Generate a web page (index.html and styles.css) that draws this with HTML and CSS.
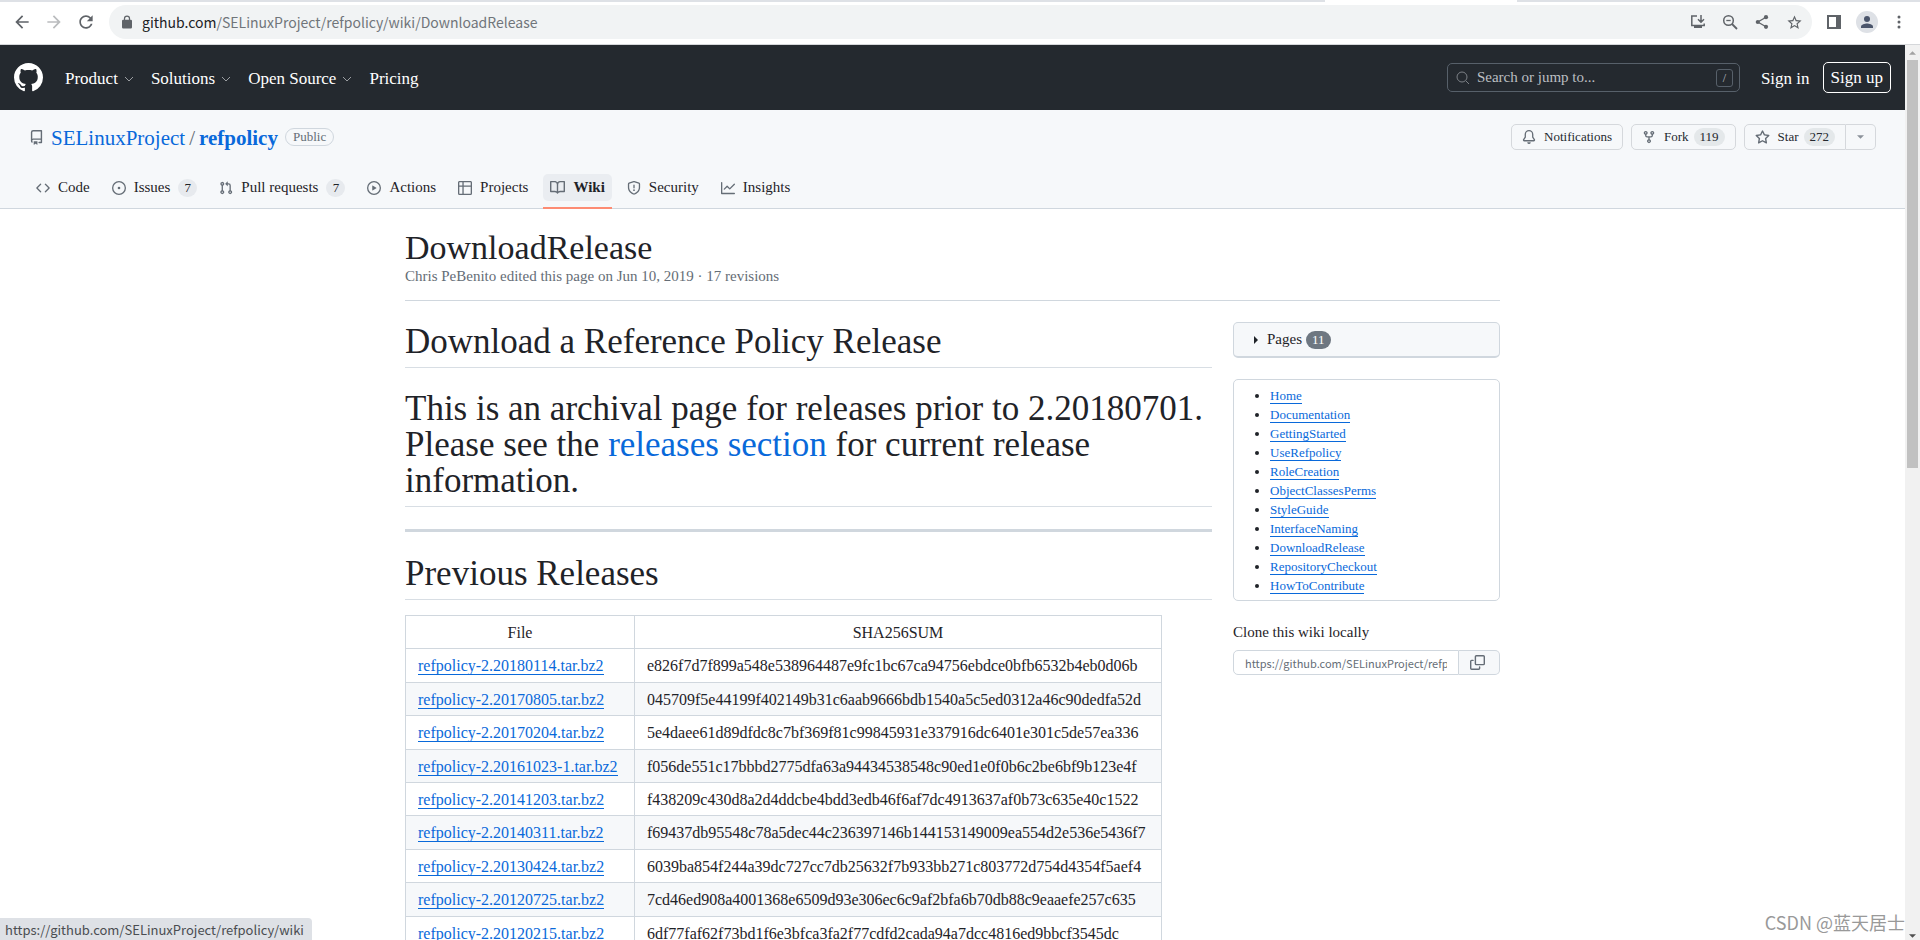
FILE: index.html
```html
<!DOCTYPE html>
<html lang="en">
<head>
    <meta charset="UTF-8">
    <meta name="viewport" content="width=device-width, initial-scale=1.0">
    <title>DownloadRelease · SELinuxProject/refpolicy Wiki</title>
    <link rel="stylesheet" href="styles.css">
</head>
<body>

    <!-- Browser toolbar -->
    <div class="tabstrip">
        <span class="tabs-left"></span>
        <span class="tabs-right"></span>
    </div>
    <div class="toolbar">
        <button class="tool" aria-label="Back"><svg viewBox="0 0 24 24" width="20" height="20"><path d="M20 11H7.83l5.59-5.59L12 4l-8 8 8 8 1.41-1.41L7.83 13H20v-2z"/></svg></button>
        <button class="tool disabled" aria-label="Forward"><svg viewBox="0 0 24 24" width="20" height="20"><path d="M12 4l-1.41 1.41L16.17 11H4v2h12.17l-5.58 5.59L12 20l8-8z"/></svg></button>
        <button class="tool" aria-label="Reload"><svg viewBox="0 0 24 24" width="20" height="20"><path d="M17.65 6.35C16.2 4.9 14.21 4 12 4c-4.42 0-7.99 3.58-7.99 8s3.57 8 7.99 8c3.73 0 6.84-2.55 7.73-6h-2.08c-.82 2.33-3.04 4-5.65 4-3.31 0-6-2.69-6-6s2.69-6 6-6c1.66 0 3.14.69 4.22 1.78L13 11h7V4l-2.35 2.35z"/></svg></button>
        <div class="omnibox">
            <svg class="lock" viewBox="0 0 16 21" width="10" height="14"><path d="M14 7h-1V5A5 5 0 0 0 3 5v2H2a2 2 0 0 0-2 2v10a2 2 0 0 0 2 2h12a2 2 0 0 0 2-2V9a2 2 0 0 0-2-2zM5 5a3 3 0 0 1 6 0v2H5z"/></svg>
            <div class="url"><span>github.com</span>/SELinuxProject/refpolicy/wiki/DownloadRelease</div>
            <button class="tool" aria-label="Install"><svg viewBox="0 0 16 16" width="16" height="16"><path fill="none" stroke="currentColor" stroke-width="1.5" d="M7 2H1.800v9.500h12.400V9.500M11 1v7M8 5.200l3 3 3-3"/><path d="M4 11.500h8V14H4z"/></svg></button>
            <button class="tool" aria-label="Zoom"><svg viewBox="0 0 16 16" width="16" height="16" class="line"><circle cx="6.500" cy="6.500" r="4.800" stroke-width="1.500"/><path stroke-width="1.800" d="M10 10l5 5"/><path stroke-width="1.300" d="M4.300 6.500h4.400"/></svg></button>
            <button class="tool" aria-label="Share"><svg viewBox="0 0 16 16" width="16" height="16"><circle cx="3.800" cy="8" r="2.100"/><circle cx="12" cy="3.200" r="2.100"/><circle cx="12" cy="12.800" r="2.100"/><path fill="none" stroke="currentColor" stroke-width="1.300" d="M12 3.200L3.800 8l8.200 4.800"/></svg></button>
            <button class="tool" aria-label="Bookmark"><svg viewBox="0 0 24 24" width="17" height="17"><path d="M22 9.240l-7.190-.62L12 2 9.190 8.630 2 9.240l5.460 4.730L5.820 21 12 17.270 18.180 21l-1.630-7.030L22 9.240zM12 15.400l-3.760 2.270 1-4.280-3.320-2.880 4.380-.38L12 6.100l1.710 4.040 4.380.38-3.320 2.880 1 4.280L12 15.400z"/></svg></button>
        </div>
        <button class="tool" aria-label="Side panel"><svg viewBox="0 0 14 14" width="14" height="14"><path fill-rule="evenodd" d="M0 0h14v14H0zM2 2v10h7V2z"/></svg></button>
        <button class="tool avatar" aria-label="Profile"><svg viewBox="0 0 14 14" width="14" height="14"><circle cx="7" cy="4" r="3"/><path d="M1 13v-1.500c0-2 4-3 6-3s6 1 6 3V13z"/></svg></button>
        <button class="tool" aria-label="Menu"><svg viewBox="0 0 4 14" width="4" height="14"><circle cx="2" cy="2" r="1.500"/><circle cx="2" cy="7" r="1.500"/><circle cx="2" cy="12" r="1.500"/></svg></button>
    </div>

    <div class="viewport">
        <div class="page">

            <header class="site-header">
                <a href="#" class="logo" aria-label="GitHub"><svg viewBox="0 0 16 16" width="29" height="29"><path d="M8 0c4.420 0 8 3.580 8 8a8.013 8.013 0 0 1-5.450 7.590c-.4.080-.55-.17-.55-.38 0-.27.010-1.130.010-2.200 0-.75-.25-1.230-.54-1.480 1.780-.2 3.650-.88 3.650-3.950 0-.88-.31-1.590-.82-2.150.080-.2.360-1.020-.080-2.120 0 0-.67-.22-2.200.82-.64-.18-1.320-.27-2-.27-.68 0-1.360.090-2 .27-1.530-1.030-2.200-.82-2.200-.82-.44 1.100-.16 1.920-.080 2.120-.51.560-.82 1.280-.82 2.150 0 3.060 1.860 3.750 3.640 3.950-.23.200-.44.550-.51 1.070-.46.210-1.610.550-2.330-.66-.15-.24-.6-.83-1.230-.82-.67.010-.27.380.010.530.340.190.730.900.820 1.130.160.450.680 1.310 2.690.940 0 .67.010 1.300.010 1.490 0 .21-.15.450-.55.380A7.995 7.995 0 0 1 0 8c0-4.420 3.580-8 8-8Z"/></svg></a>
                <nav class="site-nav">
                    <button>Product <svg viewBox="0 0 10 6" width="10" height="6"><path d="M1 1l4 4 4-4"/></svg></button>
                    <button>Solutions <svg viewBox="0 0 10 6" width="10" height="6"><path d="M1 1l4 4 4-4"/></svg></button>
                    <button>Open Source <svg viewBox="0 0 10 6" width="10" height="6"><path d="M1 1l4 4 4-4"/></svg></button>
                    <a href="#">Pricing</a>
                </nav>
                <div class="search">
                    <svg viewBox="0 0 14 14" width="14" height="14"><circle cx="6" cy="6" r="5"/><path d="M10 10l3 3"/></svg>
                    <input type="text" placeholder="Search or jump to..." aria-label="Search or jump to">
                    <kbd>/</kbd>
                </div>
                <a href="#" class="sign-in">Sign in</a>
                <a href="#" class="sign-up">Sign up</a>
            </header>

            <div class="repo-header">
                <div class="repo-top">
                    <svg class="octicon" viewBox="0 0 16 16" width="15" height="15"><path d="M2 2.500A2.500 2.500 0 0 1 4.500 0h8.750a.75.750 0 0 1 .75.750v12.500a.75.750 0 0 1-.75.750h-2.500a.75.750 0 0 1 0-1.500h1.750v-2h-8a1 1 0 0 0-.714 1.700.75.750 0 1 1-1.072 1.050A2.495 2.495 0 0 1 2 11.500Zm10.500-1h-8a1 1 0 0 0-1 1v6.708A2.486 2.486 0 0 1 4.500 9h8ZM5 12.250a.25.250 0 0 1 .25-.25h3.500a.25.250 0 0 1 .25.250v3.250a.25.250 0 0 1-.4.200l-1.450-1.087a.249.249 0 0 0-.3 0L5.400 15.700a.25.250 0 0 1-.4-.2Z"/></svg>
                    <div class="repo-name"><a href="#">SELinuxProject</a><span>/</span><a href="#" class="strong">refpolicy</a></div>
                    <span class="label">Public</span>
                    <div class="repo-actions">
                        <button class="btn"><svg class="octicon" viewBox="0 0 16 16" width="14" height="14"><path d="M8 16a2 2 0 0 0 1.985-1.750c.017-.137-.097-.25-.235-.25h-3.500c-.138 0-.252.113-.235.250A2 2 0 0 0 8 16ZM3 5a5 5 0 0 1 10 0v2.947c0 .050.015.098.042.139l1.703 2.555A1.519 1.519 0 0 1 13.482 13H2.518a1.516 1.516 0 0 1-1.263-2.360l1.703-2.554A.255.255 0 0 0 3 7.947Zm5-3.500A3.500 3.500 0 0 0 4.500 5v2.947c0 .346-.102.683-.294.970l-1.703 2.556a.017.017 0 0 0-.003.010l.001.006c0 .002.002.004.004.006l.006.004.007.001h10.964l.007-.001.006-.004.004-.006.001-.007a.017.017 0 0 0-.003-.010l-1.703-2.554a1.745 1.745 0 0 1-.294-.97V5A3.500 3.500 0 0 0 8 1.500Z"/></svg>Notifications</button>
                        <button class="btn"><svg class="octicon" viewBox="0 0 16 16" width="14" height="14"><path d="M5 5.372v.878c0 .414.336.750.750.750h4.500a.75.750 0 0 0 .75-.75v-.878a2.250 2.250 0 1 1 1.500 0v.878a2.250 2.250 0 0 1-2.250 2.250h-1.500v2.128a2.251 2.251 0 1 1-1.500 0V8.500h-1.500A2.250 2.250 0 0 1 3.500 6.250v-.878a2.250 2.250 0 1 1 1.500 0ZM5 3.250a.75.750 0 1 0-1.500 0 .75.750 0 0 0 1.500 0Zm6.750.750a.75.750 0 1 0 0-1.500.75.750 0 0 0 0 1.500Zm-3 8.750a.75.750 0 1 0-1.500 0 .75.750 0 0 0 1.500 0Z"/></svg>Fork <span class="counter">119</span></button>
                        <div class="btn-group">
                            <button class="btn"><svg class="octicon" viewBox="0 0 16 16" width="15" height="15"><path d="M8 .25a.75.750 0 0 1 .673.418l1.882 3.815 4.210.612a.75.750 0 0 1 .416 1.279l-3.046 2.970.719 4.192a.751.751 0 0 1-1.088.791L8 12.347l-3.766 1.980a.75.750 0 0 1-1.088-.79l.72-4.194L.818 6.374a.75.750 0 0 1 .416-1.280l4.210-.611L7.327.668A.75.750 0 0 1 8 .25Zm0 2.445L6.615 5.500a.75.750 0 0 1-.564.410l-3.097.450 2.240 2.184a.75.750 0 0 1 .216.664l-.528 3.084 2.769-1.456a.75.750 0 0 1 .698 0l2.770 1.456-.53-3.084a.75.750 0 0 1 .216-.664l2.240-2.183-3.096-.45a.75.750 0 0 1-.564-.41L8 2.694Z"/></svg>Star <span class="counter">272</span></button>
                            <button class="btn caret" aria-label="Add to list"><svg viewBox="0 0 8 4" width="7" height="4"><path d="M0 0h8L4 4z"/></svg></button>
                        </div>
                    </div>
                </div>

                <nav class="repo-tabs">
                    <a href="#"><svg class="octicon" viewBox="0 0 16 16" width="14" height="14"><path d="m11.280 3.220 4.250 4.250a.75.750 0 0 1 0 1.060l-4.250 4.250a.749.749 0 0 1-1.275-.326.749.749 0 0 1 .215-.734L13.940 8l-3.720-3.720a.749.749 0 0 1 .326-1.275.749.749 0 0 1 .734.215Zm-6.560 0a.751.751 0 0 1 1.042.018.751.751 0 0 1 .018 1.042L2.060 8l3.720 3.720a.749.749 0 0 1-.326 1.275.749.749 0 0 1-.734-.215L.47 8.530a.75.750 0 0 1 0-1.060Z"/></svg>Code</a>
                    <a href="#"><svg class="octicon" viewBox="0 0 16 16" width="14" height="14"><path d="M8 9.500a1.500 1.500 0 1 0 0-3 1.500 1.500 0 0 0 0 3Z"/><path d="M8 0a8 8 0 1 1 0 16A8 8 0 0 1 8 0ZM1.500 8a6.500 6.500 0 1 0 13 0 6.500 6.500 0 0 0-13 0Z"/></svg>Issues <span class="counter">7</span></a>
                    <a href="#"><svg class="octicon" viewBox="0 0 16 16" width="14" height="14"><path d="M1.500 3.250a2.250 2.250 0 1 1 3 2.122v5.256a2.251 2.251 0 1 1-1.500 0V5.372A2.250 2.250 0 0 1 1.500 3.250Zm5.677-.177L9.573.677A.25.250 0 0 1 10 .854V2.500h1A2.500 2.500 0 0 1 13.500 5v5.628a2.251 2.251 0 1 1-1.500 0V5a1 1 0 0 0-1-1h-1v1.646a.25.250 0 0 1-.427.177L7.177 3.427a.25.250 0 0 1 0-.354ZM3.750 2.500a.75.750 0 1 0 0 1.500.75.750 0 0 0 0-1.500Zm0 9.500a.75.750 0 1 0 0 1.500.75.750 0 0 0 0-1.500Zm8.250.750a.75.750 0 1 0 1.500 0 .75.750 0 0 0-1.500 0Z"/></svg>Pull requests <span class="counter">7</span></a>
                    <a href="#"><svg class="octicon" viewBox="0 0 16 16" width="14" height="14"><path d="M8 0a8 8 0 1 1 0 16A8 8 0 0 1 8 0ZM1.500 8a6.500 6.500 0 1 0 13 0 6.500 6.500 0 0 0-13 0Zm4.879-2.773 4.264 2.559a.25.250 0 0 1 0 .428l-4.264 2.559A.25.250 0 0 1 6 10.559V5.442a.25.250 0 0 1 .379-.215Z"/></svg>Actions</a>
                    <a href="#"><svg class="octicon" viewBox="0 0 16 16" width="14" height="14"><path d="M0 1.750C0 .784.784 0 1.750 0h12.500C15.216 0 16 .784 16 1.750v12.500A1.750 1.750 0 0 1 14.250 16H1.750A1.750 1.750 0 0 1 0 14.250ZM6.500 6.500v8h7.750a.25.250 0 0 0 .25-.25V6.500Zm8-1.500V1.750a.25.250 0 0 0-.25-.25H6.500V5Zm-13 1.500v7.750c0 .138.112.250.250.250H5v-8ZM5 5V1.500H1.750a.25.250 0 0 0-.25.250V5Z"/></svg>Projects</a>
                    <a href="#" class="selected"><svg class="octicon" viewBox="0 0 16 16" width="15" height="15"><path d="M0 1.750A.75.750 0 0 1 .75 1h4.253c1.227 0 2.317.590 3 1.501A3.743 3.743 0 0 1 11.006 1h4.245a.75.750 0 0 1 .75.750v10.500a.75.750 0 0 1-.75.750h-4.507a2.250 2.250 0 0 0-1.591.659l-.622.621a.75.750 0 0 1-1.060 0l-.622-.621A2.250 2.250 0 0 0 5.258 13H.75a.75.750 0 0 1-.75-.75Zm7.251 10.324.004-5.073-.002-2.253A2.250 2.250 0 0 0 5.003 2.500H1.500v9h3.757a3.750 3.750 0 0 1 1.994.574ZM8.755 4.750l-.004 7.322a3.752 3.752 0 0 1 1.992-.572H14.500v-9h-3.495a2.250 2.250 0 0 0-2.250 2.250Z"/></svg>Wiki</a>
                    <a href="#"><svg class="octicon" viewBox="0 0 16 16" width="14" height="14"><path d="M7.467.133a1.748 1.748 0 0 1 1.066 0l5.250 1.680A1.750 1.750 0 0 1 15 3.480V7c0 1.566-.32 3.182-1.303 4.682-.983 1.498-2.585 2.813-5.032 3.855a1.697 1.697 0 0 1-1.330 0c-2.447-1.042-4.049-2.357-5.032-3.855C1.320 10.182 1 8.566 1 7V3.480a1.755 1.755 0 0 1 1.217-1.667Zm.61 1.429a.25.250 0 0 0-.153 0l-5.250 1.680a.25.250 0 0 0-.174.238V7c0 1.358.275 2.666 1.057 3.860.784 1.194 2.121 2.340 4.366 3.297a.196.196 0 0 0 .154 0c2.245-.956 3.582-2.104 4.366-3.298C13.225 9.666 13.500 8.360 13.500 7V3.480a.251.251 0 0 0-.174-.237l-5.250-1.680ZM8.750 4.750v3a.75.750 0 0 1-1.500 0v-3a.75.750 0 0 1 1.500 0ZM9 10.500a1 1 0 1 1-2 0 1 1 0 0 1 2 0Z"/></svg>Security</a>
                    <a href="#"><svg class="octicon" viewBox="0 0 16 16" width="14" height="14"><path d="M1.500 1.750V13.500h13.750a.75.750 0 0 1 0 1.500H.75a.75.750 0 0 1-.75-.75V1.750a.75.750 0 0 1 1.500 0Zm14.280 2.530-5.250 5.250a.75.750 0 0 1-1.060 0L7 7.060 4.280 9.780a.751.751 0 0 1-1.042-.018.751.751 0 0 1-.018-1.042l3.250-3.250a.75.750 0 0 1 1.060 0L10 7.940l4.720-4.720a.751.751 0 0 1 1.042.018.751.751 0 0 1 .018 1.042Z"/></svg>Insights</a>
                </nav>
            </div>

            <main class="container">
                <div class="wiki-title">
                    <h1>DownloadRelease</h1>
                    <p>Chris PeBenito edited this page on Jun 10, 2019 · 17 revisions</p>
                </div>

                <div class="wiki-layout">
                    <article class="wiki-body">
                        <h2>Download a Reference Policy Release</h2>
                        <h2>This is an archival page for releases prior to 2.20180701. Please see the <a href="#">releases section</a> for current release information.</h2>
                        <hr>
                        <h2>Previous Releases</h2>
                        <table>
                            <thead>
                                <tr>
                                    <th class="file">File</th>
                                    <th>SHA256SUM</th>
                                </tr>
                            </thead>
                            <tbody>
                                <tr>
                                    <td><a href="#">refpolicy-2.20180114.tar.bz2</a></td>
                                    <td>e826f7d7f899a548e538964487e9fc1bc67ca94756ebdce0bfb6532b4eb0d06b</td>
                                </tr>
                                <tr>
                                    <td><a href="#">refpolicy-2.20170805.tar.bz2</a></td>
                                    <td>045709f5e44199f402149b31c6aab9666bdb1540a5c5ed0312a46c90dedfa52d</td>
                                </tr>
                                <tr>
                                    <td><a href="#">refpolicy-2.20170204.tar.bz2</a></td>
                                    <td>5e4daee61d89dfdc8c7bf369f81c99845931e337916dc6401e301c5de57ea336</td>
                                </tr>
                                <tr>
                                    <td><a href="#">refpolicy-2.20161023-1.tar.bz2</a></td>
                                    <td>f056de551c17bbbd2775dfa63a94434538548c90ed1e0f0b6c2be6bf9b123e4f</td>
                                </tr>
                                <tr>
                                    <td><a href="#">refpolicy-2.20141203.tar.bz2</a></td>
                                    <td>f438209c430d8a2d4ddcbe4bdd3edb46f6af7dc4913637af0b73c635e40c1522</td>
                                </tr>
                                <tr>
                                    <td><a href="#">refpolicy-2.20140311.tar.bz2</a></td>
                                    <td>f69437db95548c78a5dec44c236397146b144153149009ea554d2e536e5436f7</td>
                                </tr>
                                <tr>
                                    <td><a href="#">refpolicy-2.20130424.tar.bz2</a></td>
                                    <td>6039ba854f244a39dc727cc7db25632f7b933bb271c803772d754d4354f5aef4</td>
                                </tr>
                                <tr>
                                    <td><a href="#">refpolicy-2.20120725.tar.bz2</a></td>
                                    <td>7cd46ed908a4001368e6509d93e306ec6c9af2bfa6b70db88c9eaaefe257c635</td>
                                </tr>
                                <tr>
                                    <td><a href="#">refpolicy-2.20120215.tar.bz2</a></td>
                                    <td>6df77faf62f73bd1f6e3bfca3fa2f77cdfd2cada94a7dcc4816ed9bbcf3545dc</td>
                                </tr>
                            </tbody>
                        </table>
                    </article>

                    <aside class="sidebar">
                        <details class="pages">
                            <summary><svg viewBox="0 0 4 8" width="4" height="8"><path d="M0 0l4 4-4 4z"/></svg>Pages <span class="counter dark">11</span></summary>
                        </details>
                        <ul class="links">
                            <li><a href="#">Home</a></li>
                            <li><a href="#">Documentation</a></li>
                            <li><a href="#">GettingStarted</a></li>
                            <li><a href="#">UseRefpolicy</a></li>
                            <li><a href="#">RoleCreation</a></li>
                            <li><a href="#">ObjectClassesPerms</a></li>
                            <li><a href="#">StyleGuide</a></li>
                            <li><a href="#">InterfaceNaming</a></li>
                            <li><a href="#">DownloadRelease</a></li>
                            <li><a href="#">RepositoryCheckout</a></li>
                            <li><a href="#">HowToContribute</a></li>
                        </ul>
                        <label class="clone-label" for="clone-url">Clone this wiki locally</label>
                        <div class="clone">
                            <input type="text" id="clone-url" readonly value="https://github.com/SELinuxProject/refpolicy.wiki.git">
                            <button aria-label="Copy"><svg class="octicon" viewBox="0 0 16 16" width="15" height="15"><path d="M0 6.750C0 5.784.784 5 1.750 5h1.500a.75.750 0 0 1 0 1.500h-1.500a.25.250 0 0 0-.25.250v7.500c0 .138.112.250.250.250h7.500a.25.250 0 0 0 .25-.25v-1.500a.75.750 0 0 1 1.500 0v1.500A1.750 1.750 0 0 1 9.250 16h-7.500A1.750 1.750 0 0 1 0 14.250Z"/><path d="M5 1.750C5 .784 5.784 0 6.750 0h7.500C15.216 0 16 .784 16 1.750v7.500A1.750 1.750 0 0 1 14.250 11h-7.500A1.750 1.750 0 0 1 5 9.250Zm1.750-.25a.25.250 0 0 0-.25.250v7.500c0 .138.112.250.250.250h7.500a.25.250 0 0 0 .25-.25v-7.500a.25.250 0 0 0-.25-.25Z"/></svg></button>
                        </div>
                    </aside>
                </div>
            </main>

            <div class="status">https://github.com/SELinuxProject/refpolicy/wiki</div>
            <div class="watermark">CSDN @蓝天居士</div>
        </div>

        <div class="scrollbar">
            <svg viewBox="0 0 8 4" width="7" height="4"><path d="M0 4h8L4 0z"/></svg>
            <div class="track"><div class="thumb"></div></div>
            <svg class="down" viewBox="0 0 8 4" width="7" height="4"><path d="M0 0h8L4 4z"/></svg>
        </div>
    </div>

</body>
</html>
```

FILE: styles.css
```css
* {
    box-sizing: border-box;
}

body {
    margin: 0;
    height: 100vh;
    display: flex;
    flex-direction: column;
    overflow: hidden;
    font-family: "Liberation Serif", "Noto Sans CJK SC", serif;
    font-size: 16px;
    color: #1f2328;
    background-color: #fff;
}

a {
    color: #0969da;
    text-decoration: none;
}

button, input {
    font: inherit;
    color: inherit;
}

button {
    padding: 0;
    border: 0;
    background: none;
}

svg {
    fill: currentColor;
    flex-shrink: 0;
}

/* Browser toolbar */
.tabstrip {
    display: flex;
    justify-content: space-between;
    height: 2px;
}

.tabs-left {
    width: 69%;
    background-color: #dee1e6;
}

.tabs-right {
    width: 21%;
    background-color: #dee1e6;
}

.toolbar {
    display: flex;
    align-items: center;
    gap: 12px;
    height: 43px;
    padding: 0 19px 2px 12px;
    border-bottom: 1px solid #d5d7da;
    font-family: "Noto Sans CJK SC", sans-serif;
}

.tool {
    display: flex;
    align-items: center;
    justify-content: center;
    color: #5f6368;
}

.tool.disabled {
    color: #babcbe;
}

.tool .line {
    fill: none;
    stroke: currentColor;
}

.omnibox {
    flex: 1;
    display: flex;
    align-items: center;
    gap: 16px;
    height: 34px;
    padding: 0 9px 0 13px;
    margin: 0 3px 0 1px;
    border-radius: 17px;
    background-color: #f1f3f4;
}

.lock {
    color: #5f6368;
}

.url {
    flex: 1;
    margin-left: -6px;
    font-size: 14px;
    color: #70757a;
}

.url span {
    color: #202124;
}

.avatar {
    width: 22px;
    height: 22px;
    margin: 0 7px 0 3px;
    border-radius: 50%;
    color: #4b556b;
    background-color: #dee1e6;
}

.viewport {
    flex: 1;
    display: flex;
    min-height: 0;
}

.page {
    position: relative;
    flex: 1;
    overflow: hidden;
}

/* Site header */
.site-header {
    display: flex;
    align-items: center;
    height: 65px;
    padding: 0 14px;
    color: #fff;
    background-color: #24292f;
    font-size: 17px;
}

.site-header a {
    color: #fff;
}

.logo {
    display: flex;
}

.site-nav {
    flex: 1;
    display: flex;
    align-items: center;
    gap: 17px;
    margin-left: 22px;
    padding-top: 2px;
}

.site-nav button {
    display: flex;
    align-items: center;
    gap: 6px;
}

.site-nav svg {
    fill: none;
    stroke: #9a9da1;
}

.search {
    display: flex;
    align-items: center;
    gap: 7px;
    width: 293px;
    height: 29px;
    padding: 0 6px 0 8px;
    border: 1px solid #57606a;
    border-radius: 5px;
}

.search svg {
    fill: none;
    stroke: #7d8187;
}

.search input {
    flex: 1;
    min-width: 0;
    padding: 0;
    border: 0;
    outline: 0;
    background: none;
    font-size: 15px;
}

.search input::placeholder {
    color: #bcbfc2;
}

.search kbd {
    width: 17px;
    height: 18px;
    border: 1px solid #57606a;
    border-radius: 3px;
    font-family: inherit;
    font-size: 12px;
    line-height: 16px;
    text-align: center;
    color: #bcbfc2;
}

.sign-in {
    margin: 0 13px 0 21px;
    padding-top: 2px;
}

.sign-up {
    padding: 1px 7px 0;
    border: 1px solid #fff;
    border-radius: 5px;
    line-height: 28px;
}

/* Repository header */
.octicon {
    color: #656d76;
}

.repo-header {
    padding: 14px 29px 0;
    border-bottom: 1px solid #d0d7de;
    background-color: #f6f8fa;
}

.repo-top {
    display: flex;
    align-items: center;
    gap: 7px;
    height: 26px;
}

.repo-name {
    padding-top: 2px;
    font-size: 21px;
}

.repo-name span {
    margin: 0 4px;
    color: #656d76;
}

.strong {
    font-weight: bold;
}

.label {
    padding: 0 7px;
    border: 1px solid #d0d7de;
    border-radius: 9px;
    font-size: 13px;
    line-height: 16px;
    color: #656d76;
}

.repo-actions {
    display: flex;
    gap: 8px;
    margin-left: auto;
}

.btn {
    display: flex;
    align-items: center;
    height: 26px;
    padding: 0 10px;
    border: 1px solid #d5d8dc;
    border-radius: 5px;
    font-size: 13px;
    color: #24292f;
    background-color: #f6f8fa;
}

.btn svg {
    margin-right: 8px;
}

.btn-group {
    display: flex;
}

.btn-group .btn:first-child {
    border-radius: 5px 0 0 5px;
}

.btn-group .caret {
    padding: 0 11px;
    border-left: 0;
    border-radius: 0 5px 5px 0;
    color: #8b929a;
}

.caret svg {
    margin: 0;
}

.counter {
    min-width: 19px;
    margin-left: 5px;
    padding: 0 6px;
    border-radius: 9px;
    font-size: 13px;
    line-height: 18px;
    text-align: center;
    background-color: #e4e8ea;
}

.counter.dark {
    margin-left: 4px;
    color: #fff;
    background-color: #6e7781;
}

.repo-tabs {
    display: flex;
    gap: 8px;
    margin-top: 24px;
}

.repo-tabs a {
    position: relative;
    display: flex;
    align-items: center;
    height: 27px;
    margin-bottom: 7px;
    padding: 0 7px;
    border-radius: 5px;
    font-size: 15px;
    color: #1f2328;
}

.repo-tabs svg {
    margin-right: 8px;
}

.repo-tabs .counter {
    margin-left: 8px;
    background-color: #e7eaee;
}

.repo-tabs .selected {
    font-weight: bold;
    background-color: #eaedf1;
}

.repo-tabs .selected::after {
    content: "";
    position: absolute;
    left: 0;
    right: 0;
    bottom: -8px;
    height: 2px;
    background-color: #fd8c73;
}

/* Wiki */
.container {
    max-width: 1095px;
    margin: 0 auto;
    padding-top: 21px;
}

.wiki-title {
    padding-bottom: 14px;
    border-bottom: 1px solid #d0d7de;
}

h1, h2 {
    margin: 0;
    font-weight: normal;
    line-height: 36px;
}

h1 {
    font-size: 34px;
}

h2 {
    font-size: 35px;
}

.wiki-title p {
    margin: 0;
    font-size: 15px;
    line-height: 20px;
    color: #656d76;
}

.wiki-layout {
    display: flex;
    gap: 21px;
    padding-top: 21px;
}

.wiki-body {
    flex: 1;
}

.wiki-body h2 {
    margin-bottom: 21px;
    padding: 2px 0 7px;
    border-bottom: 1px solid #d8dee4;
}

.wiki-body hr {
    height: 3px;
    margin: 22px 0;
    border: 0;
    background-color: #d0d7de;
}

.wiki-body h2:last-of-type {
    margin-bottom: 15px;
}

table {
    width: 757px;
    border-collapse: collapse;
}

th, td {
    padding: 6px 12px 4px;
    border: 1px solid #d0d7de;
    line-height: 1.4;
}

th {
    font-weight: normal;
}

.file {
    width: 229px;
}

tbody tr:nth-child(even) {
    background-color: #f6f8fa;
}

td a, .links a {
    border-bottom: 1px solid #0969da;
}

/* Sidebar */
.sidebar {
    width: 267px;
}

.pages {
    border: 1px solid #d0d7de;
    border-bottom-width: 2px;
    border-radius: 5px;
    background-color: #f6f8fa;
}

.pages summary {
    display: flex;
    align-items: center;
    height: 33px;
    padding-left: 20px;
    font-size: 15px;
}

.pages svg {
    margin-right: 9px;
}

.links {
    margin: 21px 0 0;
    padding: 6px 0 5px 36px;
    border: 1px solid #d0d7de;
    border-radius: 5px;
    font-size: 13px;
    line-height: 19px;
}

.clone-label {
    display: block;
    margin: 21px 0 8px;
    font-size: 15px;
    line-height: 20px;
}

.clone {
    display: flex;
    height: 25px;
}

.clone input {
    flex: 1;
    min-width: 0;
    padding: 0 11px;
    border: 1px solid #d0d7de;
    border-radius: 5px 0 0 5px;
    font-family: "Noto Sans CJK SC", sans-serif;
    font-size: 11px;
    color: #656d76;
}

.clone button {
    display: flex;
    align-items: center;
    justify-content: center;
    width: 41px;
    padding-right: 3px;
    border: 1px solid #d0d7de;
    border-left: 0;
    border-radius: 0 5px 5px 0;
    background-color: #f6f8fa;
}

/* Link preview at the bottom of the window */
.status {
    position: absolute;
    left: 0;
    bottom: 0;
    padding: 2px 8px 0 5px;
    border-top-right-radius: 4px;
    font-family: "Noto Sans CJK SC", sans-serif;
    font-size: 13px;
    line-height: 20px;
    color: #4a4d51;
    background-color: #dee1e6;
}

.watermark {
    position: absolute;
    right: 0;
    bottom: 5px;
    font-family: "Noto Sans CJK SC", sans-serif;
    font-size: 18px;
    line-height: 26px;
    color: #999;
}

/* Scrollbar */
.scrollbar {
    display: flex;
    flex-direction: column;
    align-items: center;
    width: 15px;
    padding: 6px 0 2px;
    color: #a3a3a3;
    background-color: #f1f1f1;
}

.track {
    flex: 1;
    width: 11px;
    padding: 5px 0;
}

.thumb {
    height: 47%;
    background-color: #c1c1c1;
}

.down {
    color: #505050;
}
```
